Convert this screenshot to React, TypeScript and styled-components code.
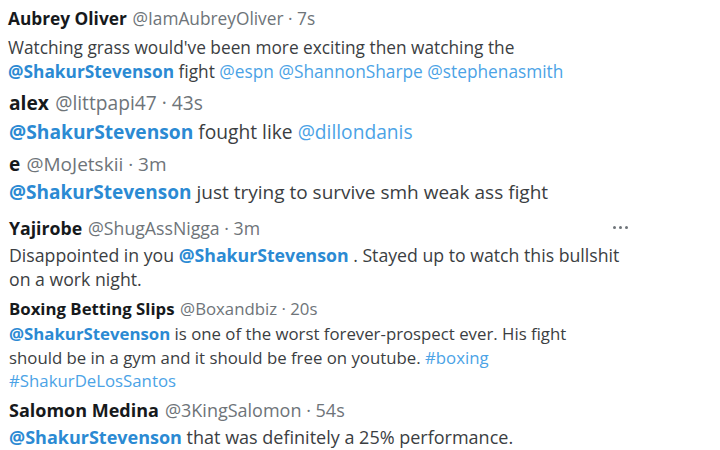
import React from "react";
import styled, { createGlobalStyle } from "styled-components";

const Global = createGlobalStyle`
  html, body { margin: 0; padding: 0; background: #ffffff; }
  body { font-family: "Open Sans", "Noto Sans", "Liberation Sans", sans-serif; }
`;

const Page = styled.div`
  width: 720px;
  height: 450px;
  overflow: hidden;
  background: #ffffff;
  padding: 8px 0 0 8px;
  box-sizing: border-box;
  display: flex;
  flex-direction: column;
`;

const Tweet = styled.section<{ $top: number; $gap: number; $size: number; $left?: number }>`
  margin-top: ${(p) => p.$top}px;
  margin-left: ${(p) => p.$left ?? 0}px;
  display: flex;
  flex-direction: column;
  gap: ${(p) => p.$gap}px;
  position: relative;
  width: 620px;
  font-size: ${(p) => p.$size}px;
`;

const Header = styled.div`
  display: flex;
  align-items: baseline;
  gap: 0.33em;
  line-height: 22px;
  white-space: nowrap;
`;

const Name = styled.span`
  font-weight: 700;
  color: #16191c;
`;

const Handle = styled.span`
  color: #6e7479;
`;

const Body = styled.p<{ $lh?: number }>`
  margin: 0;
  line-height: ${(p) => p.$lh ?? 24}px;
  color: #3b3e42;
  white-space: nowrap;
`;

const Mention = styled.span<{ $strong?: boolean }>`
  color: ${(p) => (p.$strong ? "#2b8ad3" : "#4ba3e6")};
  font-weight: ${(p) => (p.$strong ? 700 : 400)};
`;

const More = styled.div`
  position: absolute;
  left: 604px;
  top: 9px;
  display: flex;
  gap: 3px;
`;

const Dot = styled.span`
  width: 3px;
  height: 3px;
  border-radius: 50%;
  background: #6e7479;
`;

const Shakur = () => <Mention $strong>@ShakurStevenson</Mention>;

export default function App() {
  return (
    <>
      <Global />
      <Page>
        <Tweet $top={0} $gap={6} $size={17.3}>
          <Header>
            <Name>Aubrey Oliver</Name>
            <Handle>@IamAubreyOliver · 7s</Handle>
          </Header>
          <Body>
            Watching grass would've been more exciting then watching the
            <br />
            <Shakur /> fight <Mention>@espn</Mention> <Mention>@ShannonSharpe</Mention>{" "}
            <Mention>@stephenasmith</Mention>
          </Body>
        </Tweet>
        <Tweet $top={8} $gap={6} $size={19.2} $left={1}>
          <Header>
            <Name>alex</Name>
            <Handle>@littpapi47 · 43s</Handle>
          </Header>
          <Body>
            <Shakur /> fought like <Mention>@dillondanis</Mention>
          </Body>
        </Tweet>
        <Tweet $top={9} $gap={5} $size={19} $left={1}>
          <Header>
            <Name>e</Name>
            <Handle>@MoJetskii · 3m</Handle>
          </Header>
          <Body>
            <Shakur /> just trying to survive smh weak ass fight
          </Body>
        </Tweet>
        <Tweet $top={13} $gap={4} $size={17.7} $left={1}>
          <Header>
            <Name>Yajirobe</Name>
            <Handle>@ShugAssNigga · 3m</Handle>
          </Header>
          <More>
            <Dot />
            <Dot />
            <Dot />
          </More>
          <Body>
            Disappointed in you <Shakur /> . Stayed up to watch this bullshit
            <br />
            on a work night.
          </Body>
        </Tweet>
        <Tweet $top={7} $gap={2} $size={16.8} $left={1}>
          <Header>
            <Name>Boxing Betting Slips</Name>
            <Handle>@Boxandbiz · 20s</Handle>
          </Header>
          <Body $lh={23.5}>
            <Shakur /> is one of the worst forever-prospect ever. His fight
            <br />
            should be in a gym and it should be free on youtube. <Mention>#boxing</Mention>
            <br />
            <Mention>#ShakurDeLosSantos</Mention>
          </Body>
        </Tweet>
        <Tweet $top={6} $gap={4} $size={18} $left={1}>
          <Header>
            <Name>Salomon Medina</Name>
            <Handle>@3KingSalomon · 54s</Handle>
          </Header>
          <Body>
            <Shakur /> that was definitely a 25% performance.
          </Body>
        </Tweet>
      </Page>
    </>
  );
}
